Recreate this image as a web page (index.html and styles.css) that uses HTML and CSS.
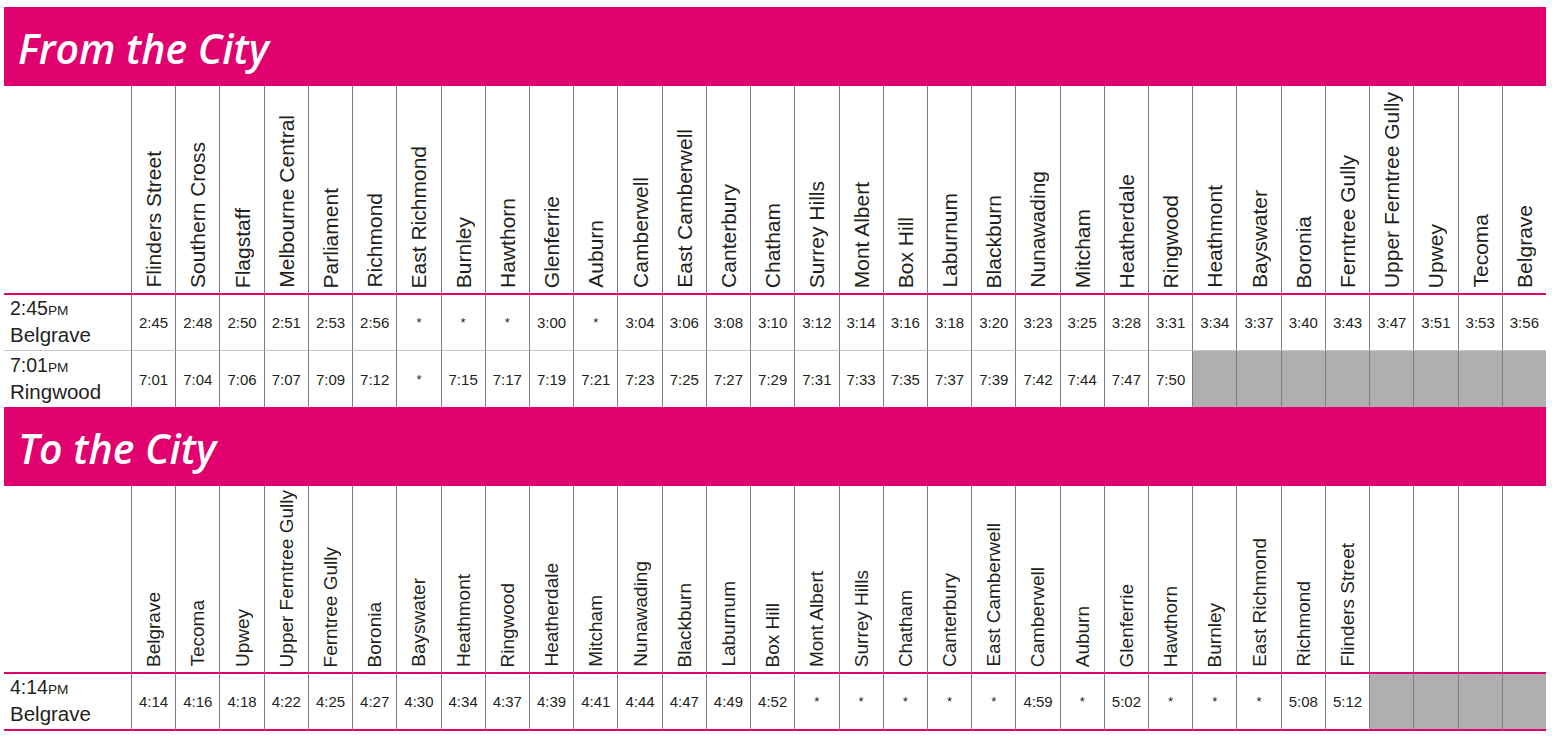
FILE: index.html
```html
<!DOCTYPE html>
<html lang="en">
<head>
<meta charset="utf-8">
<title>Belgrave line timetable</title>
<link rel="stylesheet" href="styles.css">
</head>
<body>
<main class="page">
  <section class="dir dir--from">
    <h2 class="band">From the City</h2>
    <div class="grid grid--from">
      <div class="row row--head">
        <div class="corner"></div>
        <div class="stop"><span>Flinders Street</span></div>
        <div class="stop"><span>Southern Cross</span></div>
        <div class="stop"><span>Flagstaff</span></div>
        <div class="stop"><span>Melbourne Central</span></div>
        <div class="stop"><span>Parliament</span></div>
        <div class="stop"><span>Richmond</span></div>
        <div class="stop"><span>East Richmond</span></div>
        <div class="stop"><span>Burnley</span></div>
        <div class="stop"><span>Hawthorn</span></div>
        <div class="stop"><span>Glenferrie</span></div>
        <div class="stop"><span>Auburn</span></div>
        <div class="stop"><span>Camberwell</span></div>
        <div class="stop"><span>East Camberwell</span></div>
        <div class="stop"><span>Canterbury</span></div>
        <div class="stop"><span>Chatham</span></div>
        <div class="stop"><span>Surrey Hills</span></div>
        <div class="stop"><span>Mont Albert</span></div>
        <div class="stop"><span>Box Hill</span></div>
        <div class="stop"><span>Laburnum</span></div>
        <div class="stop"><span>Blackburn</span></div>
        <div class="stop"><span>Nunawading</span></div>
        <div class="stop"><span>Mitcham</span></div>
        <div class="stop"><span>Heatherdale</span></div>
        <div class="stop"><span>Ringwood</span></div>
        <div class="stop"><span>Heathmont</span></div>
        <div class="stop"><span>Bayswater</span></div>
        <div class="stop"><span>Boronia</span></div>
        <div class="stop"><span>Ferntree Gully</span></div>
        <div class="stop"><span>Upper Ferntree Gully</span></div>
        <div class="stop"><span>Upwey</span></div>
        <div class="stop"><span>Tecoma</span></div>
        <div class="stop"><span>Belgrave</span></div>
      </div>
      <div class="row row--split">
        <div class="lbl"><span>2:45<small>pm</small></span><span class="dest">Belgrave</span></div>
        <div class="time">2:45</div>
        <div class="time">2:48</div>
        <div class="time">2:50</div>
        <div class="time">2:51</div>
        <div class="time">2:53</div>
        <div class="time">2:56</div>
        <div class="time star">*</div>
        <div class="time star">*</div>
        <div class="time star">*</div>
        <div class="time">3:00</div>
        <div class="time star">*</div>
        <div class="time">3:04</div>
        <div class="time">3:06</div>
        <div class="time">3:08</div>
        <div class="time">3:10</div>
        <div class="time">3:12</div>
        <div class="time">3:14</div>
        <div class="time">3:16</div>
        <div class="time">3:18</div>
        <div class="time">3:20</div>
        <div class="time">3:23</div>
        <div class="time">3:25</div>
        <div class="time">3:28</div>
        <div class="time">3:31</div>
        <div class="time">3:34</div>
        <div class="time">3:37</div>
        <div class="time">3:40</div>
        <div class="time">3:43</div>
        <div class="time">3:47</div>
        <div class="time">3:51</div>
        <div class="time">3:53</div>
        <div class="time">3:56</div>
      </div>
      <div class="row">
        <div class="lbl"><span>7:01<small>pm</small></span><span class="dest">Ringwood</span></div>
        <div class="time">7:01</div>
        <div class="time">7:04</div>
        <div class="time">7:06</div>
        <div class="time">7:07</div>
        <div class="time">7:09</div>
        <div class="time">7:12</div>
        <div class="time star">*</div>
        <div class="time">7:15</div>
        <div class="time">7:17</div>
        <div class="time">7:19</div>
        <div class="time">7:21</div>
        <div class="time">7:23</div>
        <div class="time">7:25</div>
        <div class="time">7:27</div>
        <div class="time">7:29</div>
        <div class="time">7:31</div>
        <div class="time">7:33</div>
        <div class="time">7:35</div>
        <div class="time">7:37</div>
        <div class="time">7:39</div>
        <div class="time">7:42</div>
        <div class="time">7:44</div>
        <div class="time">7:47</div>
        <div class="time">7:50</div>
        <div class="time none"></div>
        <div class="time none"></div>
        <div class="time none"></div>
        <div class="time none"></div>
        <div class="time none"></div>
        <div class="time none"></div>
        <div class="time none"></div>
        <div class="time none"></div>
      </div>
    </div>
  </section>

  <section class="dir dir--to">
    <h2 class="band">To the City</h2>
    <div class="grid grid--to">
      <div class="row row--head">
        <div class="corner"></div>
        <div class="stop"><span>Belgrave</span></div>
        <div class="stop"><span>Tecoma</span></div>
        <div class="stop"><span>Upwey</span></div>
        <div class="stop"><span>Upper Ferntree Gully</span></div>
        <div class="stop"><span>Ferntree Gully</span></div>
        <div class="stop"><span>Boronia</span></div>
        <div class="stop"><span>Bayswater</span></div>
        <div class="stop"><span>Heathmont</span></div>
        <div class="stop"><span>Ringwood</span></div>
        <div class="stop"><span>Heatherdale</span></div>
        <div class="stop"><span>Mitcham</span></div>
        <div class="stop"><span>Nunawading</span></div>
        <div class="stop"><span>Blackburn</span></div>
        <div class="stop"><span>Laburnum</span></div>
        <div class="stop"><span>Box Hill</span></div>
        <div class="stop"><span>Mont Albert</span></div>
        <div class="stop"><span>Surrey Hills</span></div>
        <div class="stop"><span>Chatham</span></div>
        <div class="stop"><span>Canterbury</span></div>
        <div class="stop"><span>East Camberwell</span></div>
        <div class="stop"><span>Camberwell</span></div>
        <div class="stop"><span>Auburn</span></div>
        <div class="stop"><span>Glenferrie</span></div>
        <div class="stop"><span>Hawthorn</span></div>
        <div class="stop"><span>Burnley</span></div>
        <div class="stop"><span>East Richmond</span></div>
        <div class="stop"><span>Richmond</span></div>
        <div class="stop"><span>Flinders Street</span></div>
        <div class="stop"></div>
        <div class="stop"></div>
        <div class="stop"></div>
        <div class="stop"></div>
      </div>
      <div class="row row--last">
        <div class="lbl"><span>4:14<small>pm</small></span><span class="dest">Belgrave</span></div>
        <div class="time">4:14</div>
        <div class="time">4:16</div>
        <div class="time">4:18</div>
        <div class="time">4:22</div>
        <div class="time">4:25</div>
        <div class="time">4:27</div>
        <div class="time">4:30</div>
        <div class="time">4:34</div>
        <div class="time">4:37</div>
        <div class="time">4:39</div>
        <div class="time">4:41</div>
        <div class="time">4:44</div>
        <div class="time">4:47</div>
        <div class="time">4:49</div>
        <div class="time">4:52</div>
        <div class="time star">*</div>
        <div class="time star">*</div>
        <div class="time star">*</div>
        <div class="time star">*</div>
        <div class="time star">*</div>
        <div class="time">4:59</div>
        <div class="time star">*</div>
        <div class="time">5:02</div>
        <div class="time star">*</div>
        <div class="time star">*</div>
        <div class="time star">*</div>
        <div class="time">5:08</div>
        <div class="time">5:12</div>
        <div class="time none"></div>
        <div class="time none"></div>
        <div class="time none"></div>
        <div class="time none"></div>
      </div>
    </div>
  </section>
</main>
</body>
</html>
```

FILE: styles.css
```css
* {
  box-sizing: border-box;
}

body {
  margin: 0;
  padding: 7px 0 0 4px;
  background: #ffffff;
  color: #231f20;
  font-family: "Liberation Sans", Arial, sans-serif;
}

.page {
  width: 1542px;
}

.band {
  margin: 0;
  height: 79px;
  padding: 4px 0 0 14px;
  display: flex;
  align-items: center;
  background: #e0006e;
  color: #ffffff;
  font-family: "Open Sans", "Noto Sans", sans-serif;
  font-style: italic;
  font-weight: 600;
  font-size: 41px;
  line-height: 1;
}

.grid {
  display: grid;
  grid-template-columns: 127px repeat(32, 1fr);
}

.grid--from {
  grid-template-rows: 209px 56px 56px;
}

.grid--to {
  grid-template-rows: 188px 57px;
}

.row {
  display: contents;
}

.row > * {
  border-left: 1px solid #7f7f83;
}

.row > :first-child {
  border-left: 0;
}

.row--head > * {
  display: flex;
  flex-direction: column;
  justify-content: flex-end;
  align-items: center;
  padding-bottom: 5px;
  border-bottom: 2px solid #e0006e;
}

.row--split > * {
  border-bottom: 1px solid #c6c6c8;
}

.row--last > * {
  border-bottom: 2px solid #e0006e;
}

.stop span {
  writing-mode: vertical-rl;
  transform: rotate(180deg);
  font-size: 21px;
  line-height: 1;
  white-space: nowrap;
}

.dir--to .stop span {
  font-size: 19px;
}

.time {
  display: flex;
  align-items: center;
  justify-content: center;
  font-size: 15px;
}

.star {
  font-size: 13px;
}

.none {
  background: #afafb1;
}

.lbl {
  display: flex;
  flex-direction: column;
  justify-content: center;
  padding: 0 0 2px 6px;
  font-size: 19.5px;
  line-height: 24px;
}

.lbl .dest {
  font-size: 20.5px;
}

.lbl small {
  font-size: 0.7em;
  text-transform: uppercase;
}
```
